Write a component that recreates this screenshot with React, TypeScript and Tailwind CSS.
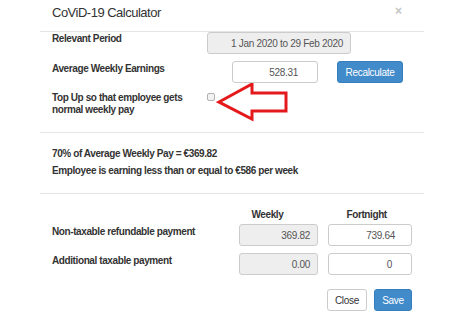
export default function App() {
  return (
    <div className="w-[474px] h-[325px] bg-white overflow-hidden text-[#333]" style={{ fontFamily: '"Liberation Sans", Arial, sans-serif' }}>
      <div className="ml-[40px] w-[384px]">
        {/* header */}
        <div className="h-[32px] px-[12px] flex items-start justify-between border-b border-[#e5e5e5]">
          <h4 className="text-[13px] leading-[15px] mt-[5px] tracking-[-0.5px]">CoViD-19 Calculator</h4>
          <span className="text-[#c4c4c4] text-[12px] leading-[12px] mt-[5px] mr-[10px] font-bold">×</span>
        </div>

        <div className="px-[12px] text-[10px] font-bold tracking-[-0.4px]">
          {/* relevant period */}
          <div className="flex items-start h-[22px]">
            <div className="w-[155px] leading-[13px]">Relevant Period</div>
            <div className="w-[144px] h-[22px] bg-[#eee] border border-[#ccc] rounded-[3px] flex items-center justify-end pr-[7px] font-normal tracking-[-0.3px] text-[#555]">
              1 Jan 2020 to 29 Feb 2020
            </div>
          </div>

          {/* average weekly earnings */}
          <div className="flex items-start h-[22px] mt-[7px]">
            <div className="w-[180px] pt-[1px] leading-[13px]">Average Weekly Earnings</div>
            <div className="w-[86px] h-[22px] bg-white border border-[#ccc] rounded-[3px] flex items-center justify-end pr-[19px] font-normal tracking-[-0.3px] text-[#555]">
              528.31
            </div>
            <button className="ml-[19px] w-[66px] h-[22px] bg-[#428bca] border border-[#357ebd] rounded-[3px] text-white font-normal tracking-[-0.3px] text-[10px]">
              Recalculate
            </button>
          </div>

          {/* top up */}
          <div className="flex items-start mt-[9px] h-[40px]">
            <div className="w-[155px] leading-[12px]">
              Top Up so that employee gets<br />normal weekly pay
            </div>
            <div className="mt-[1px] w-[8px] h-[8px] border border-[#b0b0b0] bg-[#f2f2f2] rounded-[2px]" />
            <svg width="74" height="40" viewBox="0 0 74 40" className="-mt-[9px] ml-[1px]">
              <polygon
                points="3,19 36,1 36,10 70,10 70,28 36,28 36,36"
                fill="white"
                stroke="#e3191c"
                strokeWidth="3"
                strokeLinejoin="miter"
              />
            </svg>
          </div>
        </div>

        <div className="border-b border-[#e5e5e5]" />

        <div className="px-[12px] pt-[13px] pb-[14px] text-[10px] font-bold tracking-[-0.4px] leading-[16px]">
          <div>70% of Average Weekly Pay = €369.82</div>
          <div className="mt-[1px]">Employee is earning less than or equal to €586 per week</div>
        </div>

        <div className="border-b border-[#e5e5e5]" />

        <div className="px-[12px] pt-[14px] text-[10px] font-bold tracking-[-0.4px]">
          <div className="flex h-[16px] leading-[13px]">
            <div className="w-[200px]" />
            <div className="w-[70px]">Weekly</div>
            <div className="w-[91px] text-center">Fortnight</div>
          </div>

          <div className="flex items-start">
            <div className="w-[190px] pt-[1px] leading-[13px]">Non-taxable refundable payment</div>
            <div className="w-[80px] h-[22px] bg-[#eee] border border-[#ccc] rounded-[3px] flex items-center justify-end pr-[7px] font-normal tracking-[-0.3px] text-[#555]">
              369.82
            </div>
            <div className="ml-[10px] w-[85px] h-[22px] bg-white border border-[#ccc] rounded-[3px] flex items-center justify-end pr-[16px] font-normal tracking-[-0.3px] text-[#555]">
              739.64
            </div>
          </div>

          <div className="flex items-start mt-[7px]">
            <div className="w-[190px] pt-[1px] leading-[13px]">Additional taxable payment</div>
            <div className="w-[80px] h-[22px] bg-[#eee] border border-[#ccc] rounded-[3px] flex items-center justify-end pr-[7px] font-normal tracking-[-0.3px] text-[#555]">
              0.00
            </div>
            <div className="ml-[10px] w-[85px] h-[22px] bg-white border border-[#ccc] rounded-[3px] flex items-center justify-end pr-[19px] font-normal tracking-[-0.3px] text-[#555]">
              0
            </div>
          </div>

          <div className="flex justify-end mt-[14px]">
            <button className="w-[40px] h-[22px] bg-white border border-[#ccc] rounded-[3px] text-[#333] font-normal tracking-[-0.3px] text-[10px]">
              Close
            </button>
            <button className="ml-[7px] w-[38px] h-[22px] bg-[#428bca] border border-[#357ebd] rounded-[3px] text-white font-normal tracking-[-0.3px] text-[10px]">
              Save
            </button>
          </div>
        </div>
      </div>
    </div>
  )
}
